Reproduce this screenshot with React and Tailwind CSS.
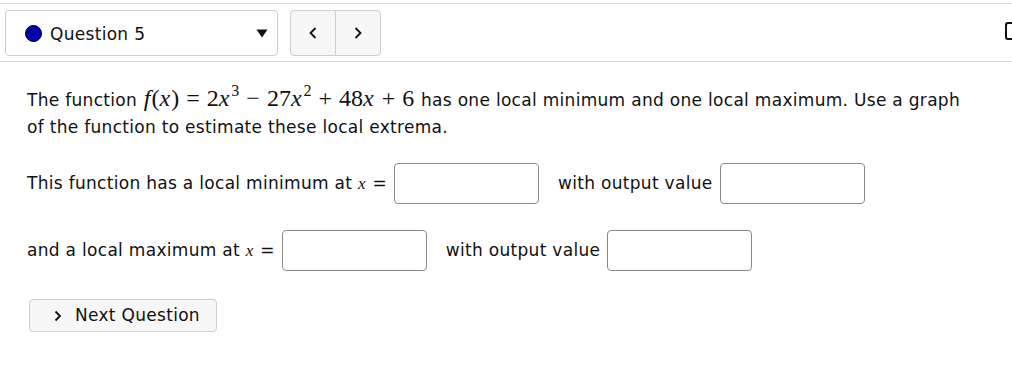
import React, { useState } from 'react';

const M = ({ children }) => (
  <span className="font-['Liberation_Serif',serif] text-[24px] leading-none tracking-normal mx-[1px]">{children}</span>
);
const V = ({ children }) => <i className="font-['Liberation_Serif',serif] pr-[1px]">{children}</i>;
const Op = ({ children }) => <span className="mx-[7px]">{children}</span>;
const Pow = ({ children }) => (
  <span className="relative -top-[10px] text-[16px] leading-none ml-[1px]">{children}</span>
);

const AnswerBox = ({ value, onChange }) => (
  <input
    type="text"
    value={value}
    onChange={(e) => onChange(e.target.value)}
    className="w-[145px] h-[41px] border border-[#8a8a8a] rounded-[4px] px-2 bg-white outline-none"
  />
);

export default function App() {
  const [answers, setAnswers] = useState({ minX: '', minY: '', maxX: '', maxY: '' });
  const set = (k) => (v) => setAnswers((a) => ({ ...a, [k]: v }));

  return (
    <div className="w-[1012px] h-[372px] bg-white text-[#111] overflow-hidden font-['DejaVu_Sans',sans-serif] text-[17px] tracking-[0.3px]">
      {/* question nav bar */}
      <div className="mt-[3px] border-t border-b border-[#d4d4d4] pt-[6px] pb-[5px] flex items-center">
        <div className="ml-[5px] w-[273px] h-[46px] border border-[#cfcfcf] rounded-[4px] flex items-center pl-[19px] pr-[9px]">
          <span className="w-[17px] h-[17px] rounded-full bg-[#0000a8] border border-black" />
          <span className="ml-[8px] pt-[3px]">Question 5</span>
          <svg className="ml-auto" width="12" height="9" viewBox="0 0 12 9">
            <path d="M0.5 0.5 L11.5 0.5 L6 8.5 Z" fill="#111" />
          </svg>
        </div>
        <div className="ml-[12px] w-[91px] h-[46px] border border-[#cfcfcf] rounded-[4px] bg-[#f7f7f7] flex">
          <button className="flex-1 flex items-center justify-center border-r border-[#cfcfcf]">
            <svg width="8" height="12" viewBox="0 0 8 12">
              <path d="M6.5 1 L1.5 6 L6.5 11" fill="none" stroke="#111" strokeWidth="1.8" />
            </svg>
          </button>
          <button className="flex-1 flex items-center justify-center">
            <svg width="8" height="12" viewBox="0 0 8 12">
              <path d="M1.5 1 L6.5 6 L1.5 11" fill="none" stroke="#111" strokeWidth="1.8" />
            </svg>
          </button>
        </div>
        <div className="ml-auto w-[7px] h-[18px] mt-[-4px] border-[2px] border-r-0 border-[#111] rounded-l-[3px]" />
      </div>

      <div className="pl-[27px]">
        <p className="mt-[24px] leading-[27px] w-[955px]">
          The function{' '}
          <M>
            <V>f</V>(<V>x</V>)<Op>=</Op>2<V>x</V>
            <Pow>3</Pow>
            <Op>−</Op>27<V>x</V>
            <Pow>2</Pow>
            <Op>+</Op>48<V>x</V>
            <Op>+</Op>6
          </M>{' '}
          has one local minimum and one local maximum. Use a graph of the function to estimate these local
          extrema.
        </p>

        <div className="mt-[22px] flex items-center">
          <span>
            This function has a local minimum at <V>x</V> =
          </span>
          <span className="ml-[7px]">
            <AnswerBox value={answers.minX} onChange={set('minX')} />
          </span>
          <span className="ml-[19px] mr-[7px]">with output value</span>
          <AnswerBox value={answers.minY} onChange={set('minY')} />
        </div>

        <div className="mt-[26px] flex items-center">
          <span>
            and a local maximum at <V>x</V> =
          </span>
          <span className="ml-[7px]">
            <AnswerBox value={answers.maxX} onChange={set('maxX')} />
          </span>
          <span className="ml-[19px] mr-[7px]">with output value</span>
          <AnswerBox value={answers.maxY} onChange={set('maxY')} />
        </div>

        <button className="mt-[28px] ml-[2px] w-[188px] h-[33px] border border-[#cfcfcf] rounded-[4px] bg-[#f7f7f7] flex items-center pl-[24px] gap-[13px]">
          <svg width="8" height="12" viewBox="0 0 8 12">
            <path d="M1.5 1.5 L6 6 L1.5 10.5" fill="none" stroke="#111" strokeWidth="1.8" />
          </svg>
          <span>Next Question</span>
        </button>
      </div>
    </div>
  );
}
